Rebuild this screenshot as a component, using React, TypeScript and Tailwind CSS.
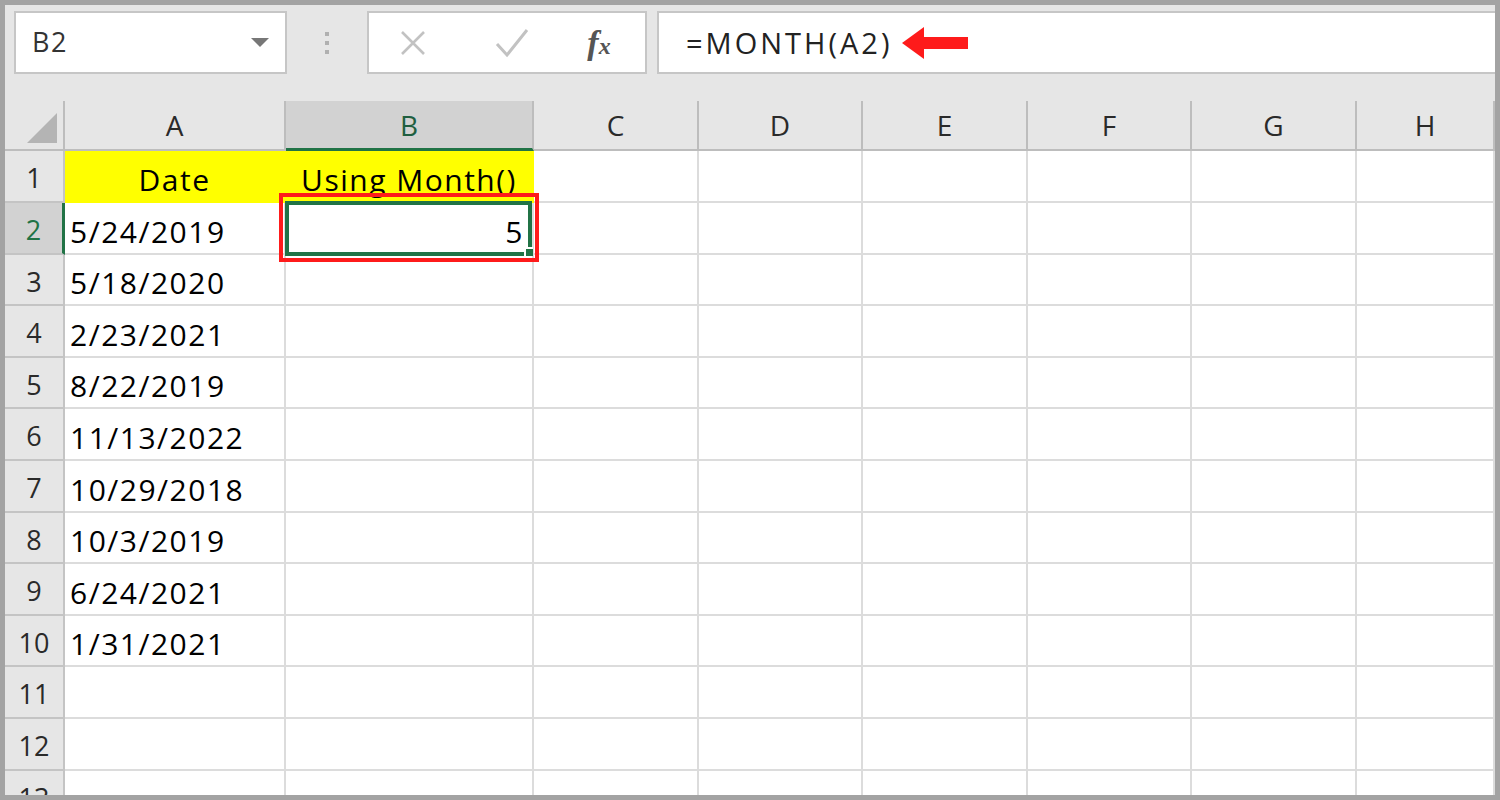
import React from "react";

const cols = ["A", "B", "C", "D", "E", "F", "G", "H"];
const dates = [
  "5/24/2019",
  "5/18/2020",
  "2/23/2021",
  "8/22/2019",
  "11/13/2022",
  "10/29/2018",
  "10/3/2019",
  "6/24/2021",
  "1/31/2021",
];

const gridCols =
  "grid grid-cols-[60px_221px_248px_165px_164px_165px_164px_165px_1fr]";
const cellFont =
  "font-['Open_Sans',sans-serif] text-[30px] font-medium tracking-[1.5px] text-black";

function RowHeader({ n, active }: { n: number; active?: boolean }) {
  return (
    <div
      className={
        "flex items-center justify-center border-b-2 pt-[5px] font-['Open_Sans',sans-serif] text-[27px] " +
        (active
          ? "border-r-[3px] border-b-[#c4c4c4] border-r-[#217346] bg-[#d2d2d2] text-[#217346]"
          : "border-r-2 border-[#c4c4c4] bg-[#e6e6e6] text-[#2a2a2a]")
      }
    >
      {n}
    </div>
  );
}

function Cell({
  children,
  align = "left",
  yellow,
  selected,
}: {
  children?: React.ReactNode;
  align?: "left" | "center" | "right";
  yellow?: boolean;
  selected?: boolean;
}) {
  const j =
    align === "center"
      ? "justify-center"
      : align === "right"
        ? "justify-end pr-[8px]"
        : "justify-start pl-[5px]";
  return (
    <div
      className={
        "flex items-end pb-[6px] leading-none border-r-2 border-b-2 " +
        j +
        " " +
        cellFont +
        " " +
        (selected ? "relative z-10 " : "") +
        (yellow ? "border-[#ffff00] bg-[#ffff00]" : "border-[#dcdcdc] bg-white")
      }
    >
      <span className="whitespace-nowrap">{children}</span>
      {selected && (
        <>
          <div className="pointer-events-none absolute -top-[2px] -left-[1px] right-0 -bottom-[3px] border-4 border-[#217346]" />
          <div className="pointer-events-none absolute -top-[10px] -left-[7px] -right-[7px] -bottom-[9px] border-4 border-[#fe1b1b]" />
          <div className="absolute -right-[1px] -bottom-[3px] h-[9px] w-[9px] border-l-2 border-t-2 border-white bg-[#217346]" />
        </>
      )}
    </div>
  );
}

export default function App() {
  return (
    <div className="h-[800px] w-[1500px] overflow-hidden bg-[#a3a3a3] p-[5px]">
      <div className="flex h-full w-full flex-col overflow-hidden bg-[#e6e6e6]">
        {/* formula bar */}
        <div className="flex h-[96px] shrink-0 items-start pt-[6px]">
          <div className="ml-[9px] flex h-[63px] w-[273px] items-center justify-between border-2 border-[#c6c6c6] bg-white pl-[16px] pr-[16px]">
            <span className="font-['Open_Sans',sans-serif] text-[27px] tracking-[1.5px] text-[#333]">
              B2
            </span>
            <svg width="18" height="9" viewBox="0 0 18 9">
              <polygon points="0,0 18,0 9,9" fill="#777" />
            </svg>
          </div>
          <div className="flex h-[63px] w-[80px] flex-col items-center justify-center gap-[5px]">
            <div className="h-[4px] w-[4px] bg-[#b0b0b0]" />
            <div className="h-[4px] w-[4px] bg-[#b0b0b0]" />
            <div className="h-[4px] w-[4px] bg-[#b0b0b0]" />
          </div>
          <div className="flex h-[63px] w-[280px] items-center border-2 border-[#c6c6c6] bg-white">
            <div className="flex w-[95px] justify-center pr-[8px]">
              <svg width="28" height="26" viewBox="0 0 28 26">
                <path d="M3 2 L25 24 M25 2 L3 24" stroke="#c2c2c2" strokeWidth="2.6" />
              </svg>
            </div>
            <div className="flex w-[95px] justify-center">
              <svg width="34" height="30" viewBox="0 0 34 30">
                <path d="M2 16 L12 27 L32 2" stroke="#c2c2c2" strokeWidth="3" fill="none" />
              </svg>
            </div>
            <div className="flex w-[80px] justify-center">
              <span className="font-['Liberation_Serif',serif] text-[34px] font-bold italic leading-none text-[#555]">
                f<span className="text-[24px]">x</span>
              </span>
            </div>
          </div>
          <div className="ml-[10px] flex h-[63px] flex-1 items-center gap-[10px] border-y-2 border-l-2 border-[#c6c6c6] bg-white pl-[27px]">
            <span className="font-['Open_Sans',sans-serif] text-[29px] tracking-[3px] text-[#222]">
              =MONTH(A2)
            </span>
            <svg width="66" height="32" viewBox="0 0 66 32">
              <polygon points="0,16 22,0 22,10 66,10 66,22 22,22 22,32" fill="#fe1b1b" />
            </svg>
          </div>
        </div>

        {/* column headers */}
        <div className={gridCols + " h-[50px] shrink-0"}>
          <div className="flex items-end justify-end border-r-2 border-b-2 border-[#bdbdbd] pb-[6px] pr-[6px]">
            <svg width="30" height="30" viewBox="0 0 30 30">
              <polygon points="30,0 30,30 0,30" fill="#b4b4b4" />
            </svg>
          </div>
          {cols.map((c) => (
            <div
              key={c}
              className={
                "flex items-center justify-center border-r-2 font-['Open_Sans',sans-serif] text-[28px] " +
                (c === "B"
                  ? "border-b-[3px] border-r-[#bdbdbd] border-b-[#217346] bg-[#d2d2d2] text-[#1f5f40]"
                  : "border-b-2 border-[#bdbdbd] bg-[#e6e6e6] text-[#2a2a2a]")
              }
            >
              {c}
            </div>
          ))}
        </div>

        {/* rows */}
        <div className="flex flex-col">
          <div className={gridCols + " h-[52px] shrink-0"}>
            <RowHeader n={1} />
            <Cell align="center" yellow>
              Date
            </Cell>
            <Cell align="center" yellow>
              Using Month()
            </Cell>
            {cols.slice(2).map((c) => (
              <Cell key={c} />
            ))}
          </div>
          {Array.from({ length: 12 }).map((_, i) => {
            const n = i + 2;
            return (
              <div key={n} className={gridCols + " h-[51.6px] shrink-0"}>
                <RowHeader n={n} active={n === 2} />
                <Cell>{dates[i]}</Cell>
                <Cell align="right" selected={n === 2}>
                  {n === 2 ? "5" : ""}
                </Cell>
                {cols.slice(2).map((c) => (
                  <Cell key={c} />
                ))}
              </div>
            );
          })}
        </div>
      </div>
    </div>
  );
}
